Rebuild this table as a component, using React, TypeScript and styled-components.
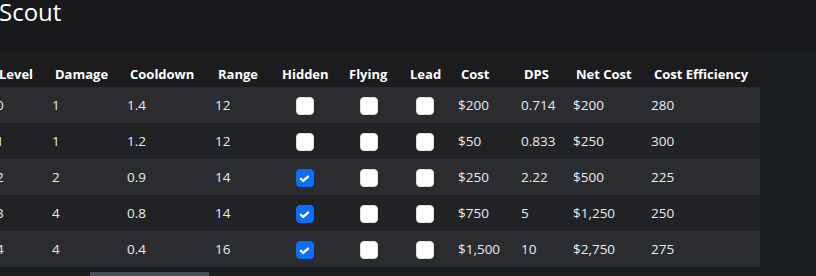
import React from "react";
import styled, { createGlobalStyle } from "styled-components";

const GlobalStyle = createGlobalStyle`
    html, body {
        margin: 0;
        padding: 0;
        height: 276px;
        overflow: hidden;
        background: #17191c;
    }
    body {
        font-family: "Open Sans", "Noto Sans", sans-serif;
        color: #dee2e6;
    }
`;

type Row = {
    level: number;
    damage: number;
    cooldown: string;
    range: number;
    hidden: boolean;
    flying: boolean;
    lead: boolean;
    cost: string;
    dps: string;
    netCost: string;
    efficiency: number;
};

const rows: Row[] = [
    { level: 0, damage: 1, cooldown: "1.4", range: 12, hidden: false, flying: false, lead: false, cost: "$200", dps: "0.714", netCost: "$200", efficiency: 280 },
    { level: 1, damage: 1, cooldown: "1.2", range: 12, hidden: false, flying: false, lead: false, cost: "$50", dps: "0.833", netCost: "$250", efficiency: 300 },
    { level: 2, damage: 2, cooldown: "0.9", range: 14, hidden: true, flying: false, lead: false, cost: "$250", dps: "2.22", netCost: "$500", efficiency: 225 },
    { level: 3, damage: 4, cooldown: "0.8", range: 14, hidden: true, flying: false, lead: false, cost: "$750", dps: "5", netCost: "$1,250", efficiency: 250 },
    { level: 4, damage: 4, cooldown: "0.4", range: 16, hidden: true, flying: false, lead: false, cost: "$1,500", dps: "10", netCost: "$2,750", efficiency: 275 },
];

//* column widths, left to right
const columns = [
    { name: "Level", width: 56 },
    { name: "Damage", width: 75 },
    { name: "Cooldown", width: 88 },
    { name: "Range", width: 64 },
    { name: "Hidden", width: 67 },
    { name: "Flying", width: 61 },
    { name: "Lead", width: 51 },
    { name: "Cost", width: 63 },
    { name: "DPS", width: 52 },
    { name: "Net Cost", width: 78 },
    { name: "Cost Efficiency", width: 117 },
];

const Check = ({ checked }: { checked: boolean }) => (
    <CheckBox $checked={checked}>
        {checked && (
            <svg width="13" height="13" viewBox="0 0 20 20">
                <path
                    d="m4.5 10.5 3.5 3.2 7.5-6.7"
                    fill="none"
                    stroke="#fff"
                    strokeWidth="3.6"
                    strokeLinecap="round"
                    strokeLinejoin="round"
                />
            </svg>
        )}
    </CheckBox>
);

const App = () => {
    return (
        <>
            <GlobalStyle />
            <Page>
                {/* -----TITLE----- */}
                <TitleBar>
                    <Title>Scout</Title>
                </TitleBar>

                {/* -----TABLE----- */}
                <Section>
                    <Table>
                        <colgroup>
                            {columns.map((c) => (
                                <col key={c.name} style={{ width: c.width }} />
                            ))}
                        </colgroup>
                        <thead>
                            <tr>
                                {columns.map((c) => (
                                    <Th key={c.name}>{c.name}</Th>
                                ))}
                            </tr>
                        </thead>
                        <tbody>
                            {rows.map((r, i) => (
                                <Tr key={r.level} $striped={i % 2 === 0}>
                                    <Td>{r.level}</Td>
                                    <Td>{r.damage}</Td>
                                    <Td>{r.cooldown}</Td>
                                    <Td>{r.range}</Td>
                                    <Td $center>
                                        <Check checked={r.hidden} />
                                    </Td>
                                    <Td $center>
                                        <Check checked={r.flying} />
                                    </Td>
                                    <Td $center>
                                        <Check checked={r.lead} />
                                    </Td>
                                    <Td>{r.cost}</Td>
                                    <Td>{r.dps}</Td>
                                    <Td>{r.netCost}</Td>
                                    <Td>{r.efficiency}</Td>
                                </Tr>
                            ))}
                        </tbody>
                    </Table>
                </Section>

                {/* -----SCROLLBAR----- */}
                <ScrollTrack>
                    <ScrollThumb />
                </ScrollTrack>
            </Page>
        </>
    );
};

//* ----- styled components -----
const Page = styled.div`
    width: 828px;
    margin-left: -12px;
`;

const TitleBar = styled.div`
    height: 50px;
    padding-left: 11px;
    box-sizing: border-box;
`;

const Title = styled.h2`
    margin: 0;
    font-size: 24px;
    line-height: 24px;
    font-weight: 500;
    color: #fff;
`;

const Section = styled.div`
    background: #1b1e21;
`;

const Table = styled.table`
    border-collapse: collapse;
    table-layout: fixed;
    width: 772px;
`;

const Th = styled.th`
    height: 34px;
    padding: 0 4px 3px 11px;
    vertical-align: bottom;
    text-align: left;
    font-size: 13px;
    font-weight: 700;
    line-height: 20px;
    color: #fff;
    background: #1c1c1e;
    white-space: nowrap;
`;

const Tr = styled.tr<{ $striped: boolean }>`
    background: ${(p) => (p.$striped ? "#2b2c2f" : "#212225")};
`;

const Td = styled.td<{ $center?: boolean }>`
    height: 36px;
    padding: ${(p) => (p.$center ? "0" : "0 4px 0 8px")};
    vertical-align: middle;
    text-align: ${(p) => (p.$center ? "center" : "left")};
    font-size: 13.5px;
    line-height: 20px;
    color: #e9ecef;
    white-space: nowrap;
`;

const CheckBox = styled.span<{ $checked: boolean }>`
    display: inline-flex;
    align-items: center;
    justify-content: center;
    vertical-align: middle;
    width: 18px;
    height: 18px;
    border-radius: 4px;
    box-sizing: border-box;
    border: 1px solid ${(p) => (p.$checked ? "#0d6efd" : "#dee2e6")};
    background: ${(p) => (p.$checked ? "#0d6efd" : "#fff")};
`;

const ScrollTrack = styled.div`
    height: 9px;
    padding: 5px 0 0 102px;
    box-sizing: border-box;
    background: #1b1e21;
`;

const ScrollThumb = styled.div`
    width: 119px;
    height: 8px;
    background: #474d54;
`;

export default App;
